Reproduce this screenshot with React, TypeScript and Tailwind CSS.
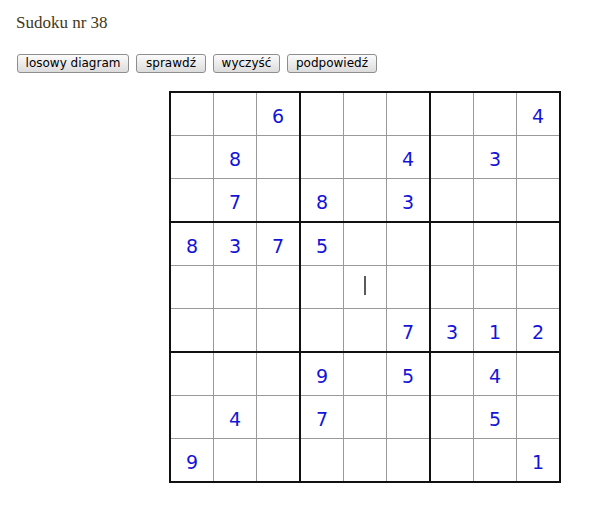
import React from "react";

const puzzle: string[] = [
  "..6.....4",
  ".8...4.3.",
  ".7.8.3...",
  "8375.....",
  ".........",
  ".....7312",
  "...9.5.4.",
  ".4.7...5.",
  "9.......1",
];

const buttons = [
  { label: "losowy diagram", w: "w-[112px]" },
  { label: "sprawdź", w: "w-[70px]" },
  { label: "wyczyść", w: "w-[67px]" },
  { label: "podpowiedź", w: "w-[90px]" },
];

function Cell({ row, col }: { row: number; col: number }) {
  const v = puzzle[row][col];
  const caret = row === 4 && col === 4;
  return (
    <div className="w-[42px] h-[42px] bg-white flex items-center justify-center pt-[6px] text-[19px] text-[#1414d6] leading-none [font-family:'DejaVu_Sans',Verdana,sans-serif]">
      {v !== "." ? v : null}
      {caret && <div className="w-[2px] h-[19px] bg-[#5a5a5a] -mt-[8px]" />}
    </div>
  );
}

function Box({ br, bc }: { br: number; bc: number }) {
  const cells = [];
  for (let r = 0; r < 3; r++) {
    for (let c = 0; c < 3; c++) {
      cells.push(<Cell key={`${r}-${c}`} row={br * 3 + r} col={bc * 3 + c} />);
    }
  }
  return <div className="grid grid-cols-3 gap-px bg-[#9a9a9a]">{cells}</div>;
}

export default function App() {
  const boxes = [];
  for (let br = 0; br < 3; br++) {
    for (let bc = 0; bc < 3; bc++) {
      boxes.push(<Box key={`${br}-${bc}`} br={br} bc={bc} />);
    }
  }

  return (
    <div className="w-[600px] h-[515px] bg-white pl-4 pt-[10px]">
      <h1 className="text-[17px] text-[#3f3818] [font-family:'Liberation_Serif','Times_New_Roman',serif]">
        Sudoku nr 38
      </h1>

      <div className="flex gap-[7px] mt-[18px] ml-px">
        {buttons.map((b) => (
          <button
            key={b.label}
            className={`${b.w} h-[19px] rounded-[3px] border border-[#8e8e8e] bg-gradient-to-b from-[#fbfbfb] to-[#dcdcdc] text-[12px] text-black leading-none [font-family:'DejaVu_Sans',Tahoma,sans-serif]`}
          >
            {b.label}
          </button>
        ))}
      </div>

      <div className="mt-[18px] ml-[153px] w-fit bg-[#111] p-[2px]">
        <div className="grid grid-cols-3 gap-[2px]">{boxes}</div>
      </div>
    </div>
  );
}
